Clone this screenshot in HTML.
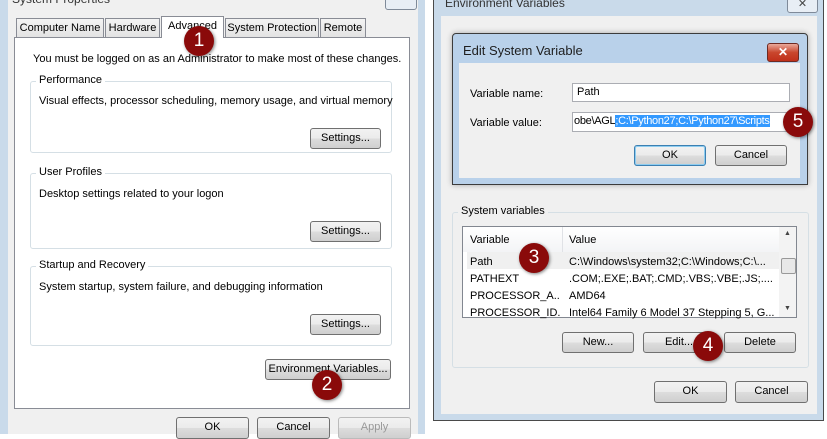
<!DOCTYPE html><html><head><style>
body{margin:0;width:827px;height:434px;overflow:hidden;background:#fff;font-family:"Liberation Sans",sans-serif;font-size:11px;color:#000;position:relative}
div,span{white-space:nowrap}
.a{position:absolute}
.btn{position:absolute;border:1px solid #707070;border-radius:3px;background:linear-gradient(#f2f2f2,#ebebeb 50%,#dddddd 50%,#cfcfcf);text-align:center;box-sizing:border-box;line-height:19px;font-size:11px;overflow:hidden}
.grp{position:absolute;border:1px solid #d5dfe5;border-radius:3px}
.lg{position:absolute;background:#fff;padding:0 3px;top:-8px;left:5px;font-size:11px}
.badge{position:absolute;width:30px;height:30px;border-radius:50%;background:#8a0a0a;color:#fff;font-size:19px;text-align:center;line-height:30px;box-shadow:1px 1px 3px rgba(0,0,0,.5)}
.tab{position:absolute;top:18px;height:19px;border:1px solid #898c95;border-bottom:none;background:linear-gradient(#f3f3f3,#e3e3e3);box-sizing:border-box;font-size:11px;line-height:18px;text-align:center;overflow:hidden}
.inp{position:absolute;background:#fff;border:1px solid #abadb3;box-sizing:border-box;font-size:11px;line-height:17px;padding-left:4px;overflow:hidden}
.col{overflow:hidden;line-height:17px;font-size:11px}
</style></head><body>
<div class="a" style="left:0;top:0;width:425px;height:434px;background:#c9daea"></div>
<div class="a" style="left:8px;top:0;width:410px;height:434px;background:#f0f0f0"></div>
<div class="a" style="left:12px;top:-8px;font-size:12px;color:#333">System Properties</div>
<div class="a" style="left:385px;top:-4px;width:30px;height:12px;border:1px solid #7f8a99;border-radius:3px;background:#e8eef5"></div>
<div class="a" style="left:14px;top:37px;width:396px;height:372px;background:#fff;border:1px solid #898c95;box-sizing:border-box"></div>
<div class="tab" style="left:16px;width:88px">Computer Name</div>
<div class="tab" style="left:105px;width:55px">Hardware</div>
<div class="tab" style="left:161px;top:16px;height:22px;width:63px;background:#fff">Advanced</div>
<div class="tab" style="left:225px;width:94px">System Protection</div>
<div class="tab" style="left:320px;width:46px">Remote</div>
<div class="a" style="left:33px;top:53px">You must be logged on as an Administrator to make most of these changes.</div>
<div class="grp" style="left:30px;top:81px;width:360px;height:70px"><span class="lg">Performance</span></div>
<div class="a" style="left:39px;top:95px">Visual effects, processor scheduling, memory usage, and virtual memory</div>
<div class="btn" style="left:310px;top:128px;width:71px;height:21px">Settings...</div>
<div class="grp" style="left:30px;top:173px;width:360px;height:74px"><span class="lg">User Profiles</span></div>
<div class="a" style="left:39px;top:188px">Desktop settings related to your logon</div>
<div class="btn" style="left:310px;top:221px;width:71px;height:21px">Settings...</div>
<div class="grp" style="left:30px;top:266px;width:360px;height:78px"><span class="lg">Startup and Recovery</span></div>
<div class="a" style="left:39px;top:281px">System startup, system failure, and debugging information</div>
<div class="btn" style="left:310px;top:314px;width:71px;height:21px">Settings...</div>
<div class="btn" style="left:265px;top:359px;width:126px;height:21px">Environment Variables...</div>
<div class="btn" style="left:176px;top:417px;width:73px;height:22px">OK</div>
<div class="btn" style="left:257px;top:417px;width:73px;height:22px">Cancel</div>
<div class="btn" style="left:338px;top:417px;width:73px;height:22px;color:#999;border-color:#bbb">Apply</div>
<div class="badge" style="left:184px;top:26px">1</div>
<div class="badge" style="left:312px;top:370px">2</div>
<div class="a" style="left:432px;top:0;width:395px;height:434px;background:#fff"></div>
<div class="a" style="left:433px;top:-2px;width:391px;height:423px;border:1px solid #4a4a4a;box-sizing:border-box;background:#c9daea"></div>
<div class="a" style="left:441px;top:16px;width:376px;height:398px;background:#f0f0f0"></div>
<div class="a" style="left:445px;top:-4px;font-size:12px;color:#333">Environment Variables</div>
<div class="a" style="left:787px;top:-4px;width:29px;height:15px;border:1px solid #7f8a99;border-radius:3px;background:#e8eef5;text-align:center;font-size:11px;line-height:14px;color:#444">✕</div>
<div class="grp" style="left:452px;top:212px;width:355px;height:154px"><span class="lg" style="background:#f0f0f0">System variables</span></div>
<div class="a" style="left:462px;top:226px;width:335px;height:92px;border:1px solid #828790;box-sizing:border-box;background:#fff"></div>
<div class="a" style="left:463px;top:227px;width:316px;height:25px;background:linear-gradient(#fff,#f3f4f6)"></div>
<div class="a" style="left:562px;top:227px;width:1px;height:25px;background:#e0e2e6"></div>
<div class="a" style="left:470px;top:234px">Variable</div>
<div class="a" style="left:569px;top:234px">Value</div>
<div class="a" style="left:467px;top:252px;width:312px;height:17px;background:#f0f0f0"></div>
<div class="a col" style="left:470px;top:254px;width:90px">Path<br>PATHEXT<br>PROCESSOR_A...<br>PROCESSOR_ID...</div>
<div class="a col" style="left:569px;top:254px;width:208px">C:\Windows\system32;C:\Windows;C:\...<br>.COM;.EXE;.BAT;.CMD;.VBS;.VBE;.JS;....<br>AMD64<br>Intel64 Family 6 Model 37 Stepping 5, G...</div>
<div class="a" style="left:779px;top:227px;width:17px;height:90px;background:#f3f3f3"></div>
<div class="a" style="left:781px;top:258px;width:13px;height:14px;border:1px solid #999;border-radius:2px;background:#e8e8e8"></div>
<div class="a" style="left:784px;top:230px;font-size:7px;color:#444">▲</div>
<div class="a" style="left:784px;top:305px;font-size:7px;color:#444">▼</div>
<div class="btn" style="left:562px;top:332px;width:72px;height:21px">New...</div>
<div class="btn" style="left:643px;top:332px;width:72px;height:21px">Edit...</div>
<div class="btn" style="left:724px;top:332px;width:72px;height:21px">Delete</div>
<div class="btn" style="left:654px;top:381px;width:73px;height:22px">OK</div>
<div class="btn" style="left:735px;top:381px;width:73px;height:22px">Cancel</div>
<div class="a" style="left:452px;top:33px;width:356px;height:152px;border:1px solid #3c3c3c;box-sizing:border-box;background:#b9d1ea;border-radius:4px 4px 0 0;box-shadow:0 0 6px rgba(0,0,0,.3)"></div>
<div class="a" style="left:463px;top:43px;font-size:13px;color:#1e1e1e">Edit System Variable</div>
<div class="a" style="left:767px;top:43px;width:30px;height:17px;border:1px solid #6e2a22;border-radius:3px;background:linear-gradient(#e9a99b,#c9462d 50%,#c0301a);color:#fff;font-size:12px;text-align:center;line-height:17px;font-weight:bold">✕</div>
<div class="a" style="left:459px;top:63px;width:341px;height:115px;background:#f0f0f0"></div>
<div class="a" style="left:470px;top:88px">Variable name:</div>
<div class="a" style="left:470px;top:117px">Variable value:</div>
<div class="inp" style="left:572px;top:83px;width:218px;height:19px">Path</div>
<div class="inp" style="left:572px;top:112px;width:218px;height:20px;padding-left:1px;letter-spacing:-0.3px">obe\AGL<span style="background:#3399ff;color:#fff">;C:\Python27;C:\Python27\Scripts</span></div>
<div class="btn" style="left:634px;top:145px;width:72px;height:21px;border-color:#3c7fb1;box-shadow:inset 0 0 0 1px #8ecdf0">OK</div>
<div class="btn" style="left:715px;top:145px;width:72px;height:21px">Cancel</div>
<div class="badge" style="left:783px;top:107px">5</div>
<div class="badge" style="left:519px;top:243px">3</div>
<div class="badge" style="left:693px;top:331px">4</div>
</body></html>
